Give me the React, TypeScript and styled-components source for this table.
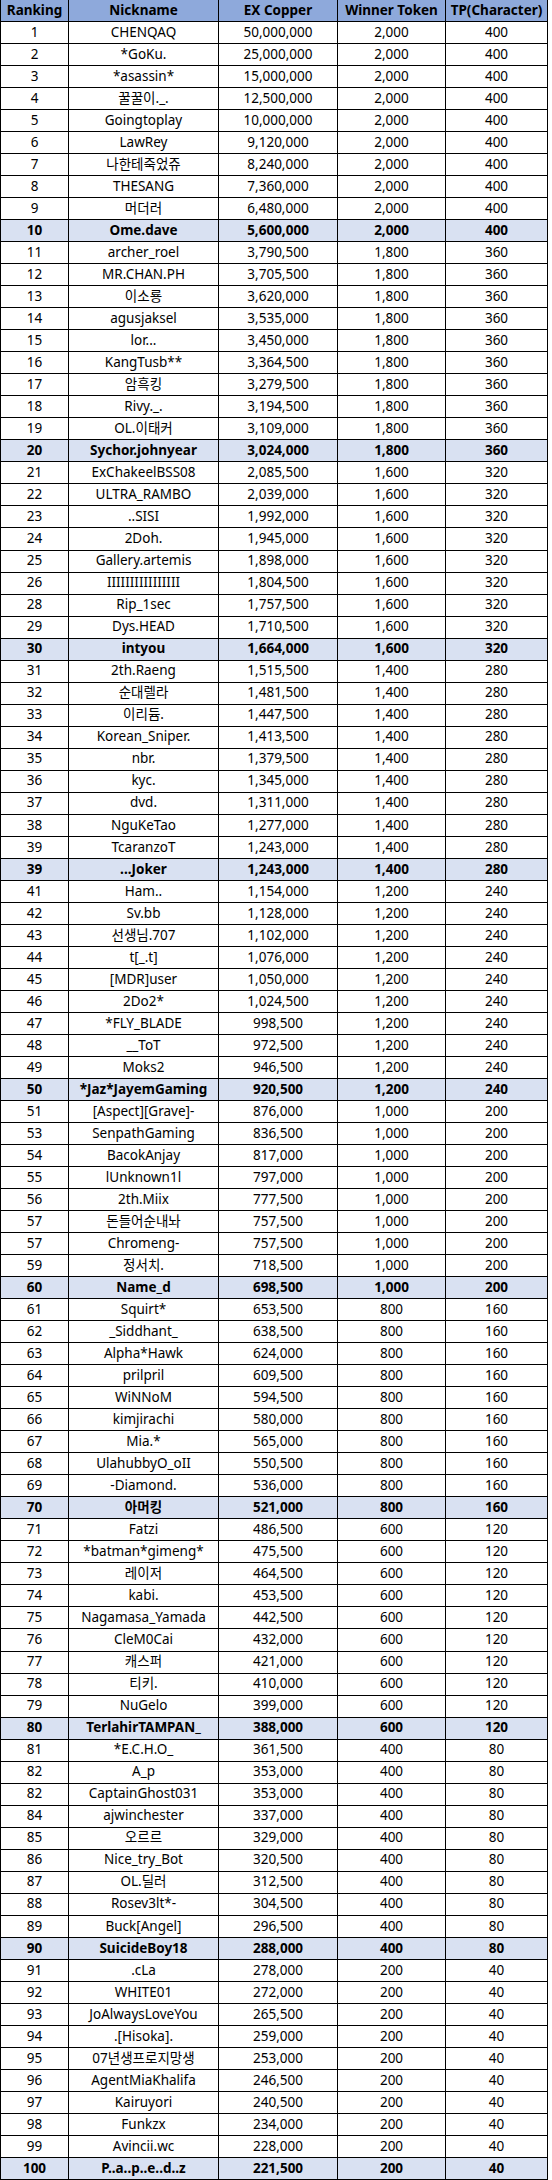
import React from "react";
import styled, { createGlobalStyle } from "styled-components";

const Global = createGlobalStyle`
  html, body { margin: 0; padding: 0; background: #ffffff; }
  body { font-family: "Noto Sans", "Noto Sans CJK KR", sans-serif; }
`;

type Row = [string, string, string, string, string, boolean?];

const rows: Row[] = [
  ["1", "CHENQAQ", "50,000,000", "2,000", "400"],
  ["2", "*GoKu.", "25,000,000", "2,000", "400"],
  ["3", "*asassin*", "15,000,000", "2,000", "400"],
  ["4", "꿀꿀이._.", "12,500,000", "2,000", "400"],
  ["5", "Goingtoplay", "10,000,000", "2,000", "400"],
  ["6", "LawRey", "9,120,000", "2,000", "400"],
  ["7", "나한테죽었쥬", "8,240,000", "2,000", "400"],
  ["8", "THESANG", "7,360,000", "2,000", "400"],
  ["9", "머더러", "6,480,000", "2,000", "400"],
  ["10", "Ome.dave", "5,600,000", "2,000", "400", true],
  ["11", "archer_roel", "3,790,500", "1,800", "360"],
  ["12", "MR.CHAN.PH", "3,705,500", "1,800", "360"],
  ["13", "이소룡", "3,620,000", "1,800", "360"],
  ["14", "agusjaksel", "3,535,000", "1,800", "360"],
  ["15", "lor...", "3,450,000", "1,800", "360"],
  ["16", "KangTusb**", "3,364,500", "1,800", "360"],
  ["17", "암흑킹", "3,279,500", "1,800", "360"],
  ["18", "Rivy._.", "3,194,500", "1,800", "360"],
  ["19", "OL.이태커", "3,109,000", "1,800", "360"],
  ["20", "Sychor.johnyear", "3,024,000", "1,800", "360", true],
  ["21", "ExChakeelBSS08", "2,085,500", "1,600", "320"],
  ["22", "ULTRA_RAMBO", "2,039,000", "1,600", "320"],
  ["23", "..SISI", "1,992,000", "1,600", "320"],
  ["24", "2Doh.", "1,945,000", "1,600", "320"],
  ["25", "Gallery.artemis", "1,898,000", "1,600", "320"],
  ["26", "IIIIIIIIIIIIIIII", "1,804,500", "1,600", "320"],
  ["28", "Rip_1sec", "1,757,500", "1,600", "320"],
  ["29", "Dys.HEAD", "1,710,500", "1,600", "320"],
  ["30", "intyou", "1,664,000", "1,600", "320", true],
  ["31", "2th.Raeng", "1,515,500", "1,400", "280"],
  ["32", "순대렐라", "1,481,500", "1,400", "280"],
  ["33", "이리듐.", "1,447,500", "1,400", "280"],
  ["34", "Korean_Sniper.", "1,413,500", "1,400", "280"],
  ["35", "nbr.", "1,379,500", "1,400", "280"],
  ["36", "kyc.", "1,345,000", "1,400", "280"],
  ["37", "dvd.", "1,311,000", "1,400", "280"],
  ["38", "NguKeTao", "1,277,000", "1,400", "280"],
  ["39", "TcaranzoT", "1,243,000", "1,400", "280"],
  ["39", "...Joker", "1,243,000", "1,400", "280", true],
  ["41", "Ham..", "1,154,000", "1,200", "240"],
  ["42", "Sv.bb", "1,128,000", "1,200", "240"],
  ["43", "선생님.707", "1,102,000", "1,200", "240"],
  ["44", "t[_.t]", "1,076,000", "1,200", "240"],
  ["45", "[MDR]user", "1,050,000", "1,200", "240"],
  ["46", "2Do2*", "1,024,500", "1,200", "240"],
  ["47", "*FLY_BLADE", "998,500", "1,200", "240"],
  ["48", "__ToT", "972,500", "1,200", "240"],
  ["49", "Moks2", "946,500", "1,200", "240"],
  ["50", "*Jaz*JayemGaming", "920,500", "1,200", "240", true],
  ["51", "[Aspect][Grave]-", "876,000", "1,000", "200"],
  ["53", "SenpathGaming", "836,500", "1,000", "200"],
  ["54", "BacokAnjay", "817,000", "1,000", "200"],
  ["55", "lUnknown1l", "797,000", "1,000", "200"],
  ["56", "2th.Miix", "777,500", "1,000", "200"],
  ["57", "돈들어순내놔", "757,500", "1,000", "200"],
  ["57", "Chromeng-", "757,500", "1,000", "200"],
  ["59", "정서치.", "718,500", "1,000", "200"],
  ["60", "Name_d", "698,500", "1,000", "200", true],
  ["61", "Squirt*", "653,500", "800", "160"],
  ["62", "_Siddhant_", "638,500", "800", "160"],
  ["63", "Alpha*Hawk", "624,000", "800", "160"],
  ["64", "prilpril", "609,500", "800", "160"],
  ["65", "WiNNoM", "594,500", "800", "160"],
  ["66", "kimjirachi", "580,000", "800", "160"],
  ["67", "Mia.*", "565,000", "800", "160"],
  ["68", "UlahubbyO_oII", "550,500", "800", "160"],
  ["69", "-Diamond.", "536,000", "800", "160"],
  ["70", "아머킹", "521,000", "800", "160", true],
  ["71", "Fatzi", "486,500", "600", "120"],
  ["72", "*batman*gimeng*", "475,500", "600", "120"],
  ["73", "레이저", "464,500", "600", "120"],
  ["74", "kabi.", "453,500", "600", "120"],
  ["75", "Nagamasa_Yamada", "442,500", "600", "120"],
  ["76", "CleM0Cai", "432,000", "600", "120"],
  ["77", "캐스퍼", "421,000", "600", "120"],
  ["78", "티키.", "410,000", "600", "120"],
  ["79", "NuGelo", "399,000", "600", "120"],
  ["80", "TerlahirTAMPAN_", "388,000", "600", "120", true],
  ["81", "*E.C.H.O_", "361,500", "400", "80"],
  ["82", "A_p", "353,000", "400", "80"],
  ["82", "CaptainGhost031", "353,000", "400", "80"],
  ["84", "ajwinchester", "337,000", "400", "80"],
  ["85", "오르르", "329,000", "400", "80"],
  ["86", "Nice_try_Bot", "320,500", "400", "80"],
  ["87", "OL.딜러", "312,500", "400", "80"],
  ["88", "Rosev3lt*-", "304,500", "400", "80"],
  ["89", "Buck[Angel]", "296,500", "400", "80"],
  ["90", "SuicideBoy18", "288,000", "400", "80", true],
  ["91", ".cLa", "278,000", "200", "40"],
  ["92", "WHITE01", "272,000", "200", "40"],
  ["93", "JoAlwaysLoveYou", "265,500", "200", "40"],
  ["94", ".[Hisoka].", "259,000", "200", "40"],
  ["95", "07년생프로지망생", "253,000", "200", "40"],
  ["96", "AgentMiaKhalifa", "246,500", "200", "40"],
  ["97", "Kairuyori", "240,500", "200", "40"],
  ["98", "Funkzx", "234,000", "200", "40"],
  ["99", "Avincii.wc", "228,000", "200", "40"],
  ["100", "P..a..p..e..d..z", "221,500", "200", "40", true],
];

const headers = ["Ranking", "Nickname", "EX Copper", "Winner Token", "TP(Character)"];

const Sheet = styled.div<{ $rows: number }>`
  display: grid;
  grid-template-columns: 68px 150px 119px 108px 102px;
  grid-template-rows: repeat(${(p) => p.$rows}, 1fr);
  width: 548px;
  height: 2180px;
  box-sizing: border-box;
  border-left: 1px solid #000;
`;

const Cell = styled.div<{ $head?: boolean; $mark?: boolean }>`
  box-sizing: border-box;
  border-right: 1px solid #000;
  border-bottom: 1px solid #000;
  display: flex;
  align-items: center;
  justify-content: center;
  overflow: hidden;
  white-space: nowrap;
  font-size: 13.5px;
  line-height: 1;
  color: #000;
  font-weight: ${(p) => (p.$head || p.$mark ? 700 : 400)};
  background: ${(p) => (p.$head ? "#8ea9db" : p.$mark ? "#d9e1f2" : "#ffffff")};
`;

export default function App() {
  return (
    <>
      <Global />
      <Sheet $rows={rows.length + 1}>
        {headers.map((h) => (
          <Cell key={h} $head>
            {h}
          </Cell>
        ))}
        {rows.map((r, i) =>
          r.slice(0, 5).map((v, j) => (
            <Cell key={`${i}-${j}`} $mark={!!r[5]}>
              {v as string}
            </Cell>
          ))
        )}
      </Sheet>
    </>
  );
}
